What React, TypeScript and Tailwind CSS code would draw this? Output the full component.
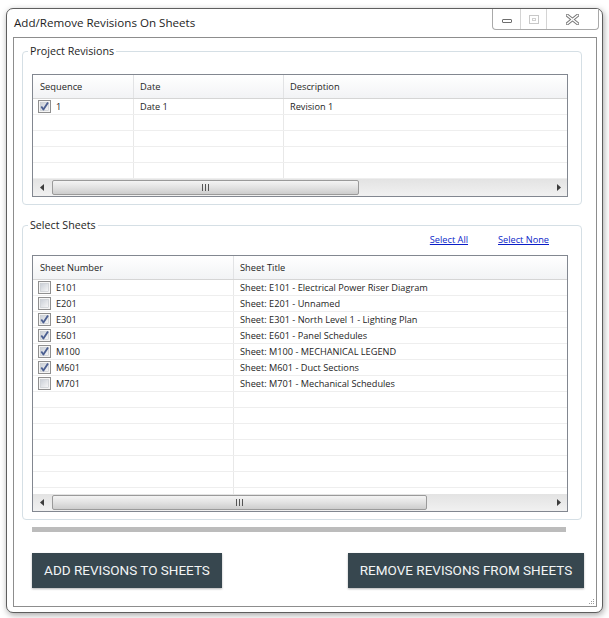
import React from "react";

const REVISIONS = [{ seq: "1", date: "Date 1", desc: "Revision 1", checked: true }];

const SHEETS = [
  { num: "E101", title: "Sheet: E101 - Electrical Power Riser Diagram", checked: false },
  { num: "E201", title: "Sheet: E201 - Unnamed", checked: false },
  { num: "E301", title: "Sheet: E301 - North Level 1 - Lighting Plan", checked: true },
  { num: "E601", title: "Sheet: E601 - Panel Schedules", checked: true },
  { num: "M100", title: "Sheet: M100 - MECHANICAL LEGEND", checked: true },
  { num: "M601", title: "Sheet: M601 - Duct Sections", checked: true },
  { num: "M701", title: "Sheet: M701 - Mechanical Schedules", checked: false },
];

function CheckBox({ checked }: { checked: boolean }) {
  return (
    <svg width="13" height="13" viewBox="0 0 13 13" className="shrink-0">
      <defs>
        <linearGradient id="cb-fill" x1="0" y1="0" x2="1" y2="1">
          <stop offset="0" stopColor="#c9ced6" />
          <stop offset="1" stopColor="#f7f7f7" />
        </linearGradient>
      </defs>
      <rect x="0.5" y="0.5" width="12" height="12" fill="#f5f5f5" stroke="#8f8f8f" />
      <rect x="2.5" y="2.5" width="8" height="8" fill="url(#cb-fill)" stroke="#c2c6cc" strokeWidth="0.6" />
      {checked && (
        <path d="M3.3 6.6 L5.4 9.6 L10 2.4" fill="none" stroke="#4b5f91" strokeWidth="1.8" strokeLinejoin="round" />
      )}
    </svg>
  );
}

function HScroll({ thumbClass }: { thumbClass: string }) {
  return (
    <div className="flex h-[17px] items-stretch bg-gradient-to-b from-[#e3e3e3] to-[#f1f1f1]">
      <div className="flex w-[17px] items-center justify-center">
        <svg width="4" height="7" viewBox="0 0 4 7">
          <path d="M4 0 L0 3.5 L4 7 Z" fill="#3c3c3c" />
        </svg>
      </div>
      <div className="flex flex-1 items-center pl-[2px]">
        <div
          className={`flex h-[15px] items-center justify-center rounded-[2px] border border-[#9a9a9a] bg-gradient-to-b from-[#f4f4f4] via-[#e2e2e2] to-[#cdcdcd] ${thumbClass}`}
        >
          <div className="flex gap-[2px]">
            <span className="h-[7px] w-[1px] bg-[#555]" />
            <span className="h-[7px] w-[1px] bg-[#555]" />
            <span className="h-[7px] w-[1px] bg-[#555]" />
          </div>
        </div>
      </div>
      <div className="flex w-[17px] items-center justify-center">
        <svg width="4" height="7" viewBox="0 0 4 7">
          <path d="M0 0 L4 3.5 L0 7 Z" fill="#3c3c3c" />
        </svg>
      </div>
    </div>
  );
}

function GroupBox({ title, children }: { title: string; children: React.ReactNode }) {
  return (
    <fieldset className="ml-[8px] w-[560px] rounded-[4px] border border-[#d5dfe5]">
      <legend className="ml-[5px] px-[2px] text-[10.7px] leading-[16px] text-[#1e1e1e]">{title}</legend>
      {children}
    </fieldset>
  );
}

export default function App() {
  return (
    <div className="min-h-screen bg-white pl-[6px] pt-[8px] font-['Open_Sans','Noto_Sans',sans-serif] text-[#1e1e1e]">
      <div className="flex h-[605px] w-[597px] flex-col rounded-[7px] border border-[#5e5e5e] bg-white shadow-[1px_2px_6px_rgba(0,0,0,0.35)]">
        {/* title bar */}
        <div className="flex h-[28px] items-start">
          <div className="pl-[7px] pt-[6px] text-[11.6px] leading-[16px]">Add/Remove Revisions On Sheets</div>
          <div className="ml-auto mr-[3px] flex h-[21px] rounded-b-[4px] border border-t-0 border-[#a9a9a9] bg-white">
            <div className="flex w-[28px] items-end justify-center border-r border-[#d4d4d4] pb-[6px]">
              <span className="h-[4px] w-[10px] rounded-[1px] border border-[#6e6e6e] bg-white" />
            </div>
            <div className="flex w-[26px] items-center justify-center border-r border-[#d4d4d4]">
              <span className="flex h-[9px] w-[10px] items-center justify-center border border-[#c8c8c8]">
                <span className="h-[3px] w-[4px] border border-[#d0d0d0]" />
              </span>
            </div>
            <div className="flex w-[51px] items-center justify-center">
              <svg width="13" height="11" viewBox="0 0 13 11">
                <path d="M1.5 1.5 L11.5 9.5 M11.5 1.5 L1.5 9.5" stroke="#7a7a7a" strokeWidth="3.4" strokeLinecap="square" />
                <path d="M1.5 1.5 L11.5 9.5 M11.5 1.5 L1.5 9.5" stroke="#ffffff" strokeWidth="1.5" strokeLinecap="square" />
              </svg>
            </div>
          </div>
        </div>

        {/* client area */}
        <div className="relative mb-[5px] ml-[6px] mr-[5px] flex flex-1 flex-col border border-[#8d8d8d] bg-white">
          <div className="mt-[5px]">
            <GroupBox title="Project Revisions">
              <div className="pb-[7px] pl-[9px] pr-[13px] pt-[15px]">
                <div className="flex flex-col border border-[#828790] bg-white">
                  <div className="grid h-[24px] grid-cols-[101px_150px_1fr] border-b border-[#d5d5d5] bg-gradient-to-b from-white to-[#f2f3f5] text-[9.3px]">
                    <div className="flex items-center border-r border-[#e2e3e5] pl-[7px]">Sequence</div>
                    <div className="flex items-center border-r border-[#e2e3e5] pl-[6px]">Date</div>
                    <div className="flex items-center pl-[6px]">Description</div>
                  </div>
                  <div className="h-[80px] overflow-hidden text-[9.2px]">
                    {REVISIONS.map((r) => (
                      <div key={r.seq} className="grid h-[16px] grid-cols-[101px_150px_1fr] border-b border-[#eeeeee]">
                        <div className="flex items-center gap-[5px] border-r border-[#e8e8e8] pl-[5px]">
                          <CheckBox checked={r.checked} />
                          <span>{r.seq}</span>
                        </div>
                        <div className="flex items-center border-r border-[#e8e8e8] pl-[6px]">{r.date}</div>
                        <div className="flex items-center pl-[6px]">{r.desc}</div>
                      </div>
                    ))}
                    {[0, 1, 2, 3, 4].map((i) => (
                      <div key={i} className="grid h-[16px] grid-cols-[101px_150px_1fr] border-b border-[#eeeeee]">
                        <div className="border-r border-[#e8e8e8]" />
                        <div className="border-r border-[#e8e8e8]" />
                        <div />
                      </div>
                    ))}
                  </div>
                  <HScroll thumbClass="w-[307px]" />
                </div>
              </div>
            </GroupBox>
          </div>

          <div className="mt-[12px]">
            <GroupBox title="Select Sheets">
              <div className="pb-[7px] pl-[9px] pr-[13px]">
                <div className="flex h-[14px] items-center justify-end gap-[30px] pr-[19px] text-[9.2px] text-[#0a1ec8]">
                  <span className="underline">Select All</span>
                  <span className="underline">Select None</span>
                </div>
                <div className="mt-[8px] flex flex-col border border-[#828790] bg-white">
                  <div className="grid h-[24px] grid-cols-[201px_1fr] border-b border-[#d5d5d5] bg-gradient-to-b from-white to-[#f2f3f5] text-[9.3px]">
                    <div className="flex items-center border-r border-[#e2e3e5] pl-[7px]">Sheet Number</div>
                    <div className="flex items-center pl-[6px]">Sheet Title</div>
                  </div>
                  <div className="h-[214px] overflow-hidden text-[9.2px]">
                    {SHEETS.map((s) => (
                      <div key={s.num} className="grid h-[16px] grid-cols-[201px_1fr] border-b border-[#eeeeee]">
                        <div className="flex items-center gap-[5px] border-r border-[#e8e8e8] pl-[5px]">
                          <CheckBox checked={s.checked} />
                          <span>{s.num}</span>
                        </div>
                        <div className="flex items-center pl-[6px]">{s.title}</div>
                      </div>
                    ))}
                    {[0, 1, 2, 3, 4, 5, 6].map((i) => (
                      <div key={i} className="grid h-[16px] grid-cols-[201px_1fr] border-b border-[#eeeeee]">
                        <div className="border-r border-[#e8e8e8]" />
                        <div />
                      </div>
                    ))}
                  </div>
                  <HScroll thumbClass="w-[375px]" />
                </div>
              </div>
            </GroupBox>
          </div>

          <div className="ml-[18px] mt-[7px] h-[5px] w-[534px] bg-[#bcbcbc]" />

          <div className="mt-[21px] flex">
            <button className="ml-[18px] flex h-[35px] w-[190px] items-center justify-center bg-[#37474f] font-['Roboto',sans-serif] text-[13.5px] font-normal text-[#f2f4f5] shadow-[0_1px_2px_rgba(0,0,0,0.3)]">
              ADD REVISONS TO SHEETS
            </button>
            <button className="ml-auto mr-[12px] flex h-[35px] w-[236px] items-center justify-center bg-[#37474f] font-['Roboto',sans-serif] text-[13.5px] font-normal text-[#f2f4f5] shadow-[0_1px_2px_rgba(0,0,0,0.3)]">
              REMOVE REVISONS FROM SHEETS
            </button>
          </div>

          <svg width="7" height="7" viewBox="0 0 7 7" className="absolute bottom-[1px] right-[1px]">
            <rect x="5" y="1" width="1" height="1" fill="#9a9a9a" />
            <rect x="3" y="3" width="1" height="1" fill="#9a9a9a" />
            <rect x="5" y="3" width="1" height="1" fill="#9a9a9a" />
            <rect x="1" y="5" width="1" height="1" fill="#9a9a9a" />
            <rect x="3" y="5" width="1" height="1" fill="#9a9a9a" />
            <rect x="5" y="5" width="1" height="1" fill="#9a9a9a" />
          </svg>
        </div>
      </div>
    </div>
  );
}
